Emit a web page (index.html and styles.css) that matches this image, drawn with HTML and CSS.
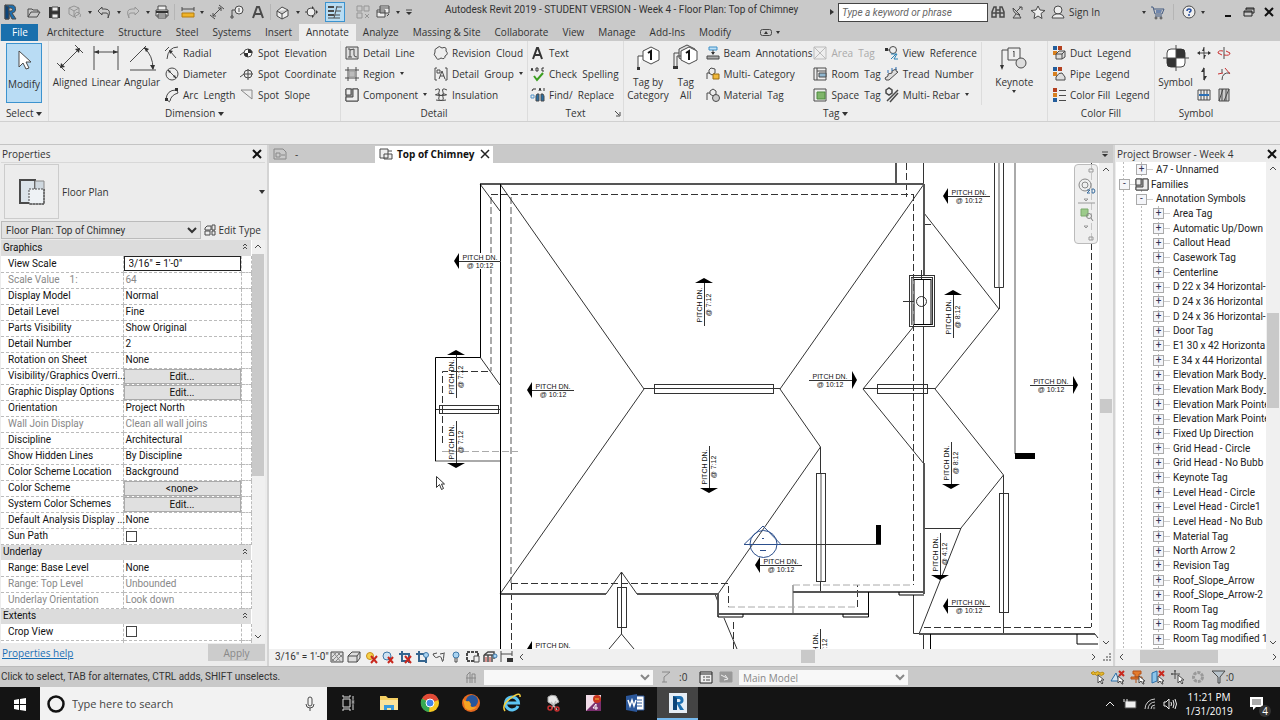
FILE: index.html
```html
<!DOCTYPE html>
<html lang="en">
<head>
    <meta charset="UTF-8">
    <meta name="viewport" content="width=device-width, initial-scale=1.0">
    <title>Autodesk Revit 2019</title>
    <link rel="stylesheet" href="styles.css">
</head>
<body>
    <!-- title bar -->
    <header class="titlebar">
        <div class="quick">
            <button class="logo" aria-label="Revit"><svg width="16" height="18" viewBox="0 0 16 18"><path d="M3 2h6a4 4 0 0 1 1 8l4 6h-4l-3-6v6H3z" fill="#1c6fb0"/><path d="M3 2l4 2v12H3z" fill="#0c4479"/><path d="M7 5h2a1.500 1.500 0 0 1 0 3H7z" fill="#c9c9c9"/></svg></button>
            <button aria-label="Open"><svg width="16" height="16"><path d="M2 13V5h4l1 1h5v2M2 13l3-5h9l-3 5z"/></svg></button>
            <button aria-label="Save"><svg width="16" height="16"><path class="dk" d="M2 3h11v11H2z"/><path d="M5 3h6v4H5zM5 10h6v4H5z" fill="#eee"/></svg></button>
            <button aria-label="Synchronize" class="dim"><svg width="16" height="16"><path d="M7 2l5 2v6l-5 3-5-3V4zM2 4l5 3 5-3M7 7v6M9 14a3 3 0 1 1 4-1"/></svg></button>
            <i class="car"></i>
            <button aria-label="Undo"><svg width="16" height="16"><path d="M6 3L2 7l4 4V9h4q3 0 2 5 4-9-3-9H6z"/></svg></button>
            <i class="car"></i>
            <button aria-label="Redo" class="dim"><svg width="16" height="16"><path d="M10 3l4 4-4 4V9H6q-3 0-2 5-4-9 3-9h3z"/></svg></button>
            <i class="car"></i>
            <button aria-label="Print"><svg width="16" height="16"><path d="M4 6V2h8v4M2 6h12v6H2zM4 10h8v4H4z" fill="#eee"/><path class="dk" d="M2 7h12v2H2z"/></svg></button>
            <span class="sep"></span>
            <button aria-label="Measure"><svg width="16" height="16"><path d="M2 3v4M14 3v4M2 5h12"/><path d="M2 9h12v4H2z" fill="#f0b429" stroke="#b57d10"/></svg></button>
            <i class="car"></i>
            <button aria-label="Aligned Dimension"><svg width="16" height="16"><path d="M4 12l8-8M1 11l5 4M10 1l5 4M4 12V9M4 12h3M12 4H9M12 4v3"/></svg></button>
            <button aria-label="Tag by Category"><svg width="16" height="16"><circle cx="10" cy="6" r="4" fill="#eee"/><path d="M10 4v4M6 6H3v6M2 12h2v2H2z"/></svg></button>
            <button aria-label="Text"><svg width="16" height="16"><path d="M3 14L7 3h2l4 11M5 10h6" stroke-width="2"/></svg></button>
            <span class="sep"></span>
            <button aria-label="3D View"><svg width="16" height="16"><path d="M2 7l5-4 6 3v6l-6 3-5-3zM2 7l5 3 6-4M7 10v5" fill="#eee"/></svg></button>
            <i class="car"></i>
            <button aria-label="Section"><svg width="16" height="16"><circle cx="7" cy="8" r="4" fill="#eee"/><path class="dk" d="M8 2l6 6-6 6v-2a4 4 0 0 0 0-8z"/><path d="M1 8h3"/></svg></button>
            <button aria-label="Thin Lines" class="lines"><svg width="16" height="16"><path d="M1 3h6M1 7h6M1 11h6" stroke-width="2"/><path d="M1 14h12M10 3h5M9 7h5M8 11h5M10 2L7 14"/></svg></button>
            <span class="sep clear"></span>
            <button aria-label="Close Hidden Windows" class="dim"><svg width="16" height="16"><path d="M2 2h5v5H2zM9 2h5v5H9zM2 9h5v5H2zM10 10l4 4M14 10l-4 4"/></svg></button>
            <button aria-label="Switch Windows"><svg width="16" height="16"><path d="M5 2h9v7H5zM5 4h9M2 6h8v7H2z" fill="#eee"/><path d="M2 8h8M12 12l2-2"/></svg></button>
            <i class="car"></i>
            <button aria-label="Customize"><svg width="10" height="10"><path d="M2 3h6"/><path class="dk" d="M2 5h6L5 8z"/></svg></button>
        </div>
        <h1>Autodesk Revit 2019 - STUDENT VERSION - Week 4 - Floor Plan: Top of Chimney</h1>
        <div class="search">
            <i class="car right"></i>
            <input type="text" aria-label="Search help" placeholder="Type a keyword or phrase">
        </div>
        <div class="info">
            <button aria-label="Search"><svg width="16" height="16"><path d="M2 13V8l2-5h2v10zM14 13V8l-2-5h-2v10zM6 6h4v3H6zM2 9h4M10 9h4" stroke-width="1.500"/></svg></button>
            <button aria-label="Communication Center"><svg width="16" height="16"><path d="M3 4q0 6 7 7zM7 7l4-4M9 3h3v3M6 10l-3 4h8l-2-3"/></svg></button>
            <button aria-label="Favorites"><svg width="16" height="16"><path d="M8 2l2 4 5 .5-4 3 1 5-4-2.500-4 2.500 1-5-4-3L6 6z" fill="#eee"/></svg></button>
            <button class="signin"><svg width="16" height="16"><circle cx="8" cy="6" r="4" fill="#eee"/><path d="M2 14q0-3 4-4h4q4 1 4 4z" fill="#eee"/></svg>Sign In</button>
            <i class="car"></i>
            <button aria-label="App Store"><svg width="16" height="16"><path d="M1 3h2l2 7h7l2-5H4M5 12h7" stroke="#435a80"/><circle cx="6" cy="14" r="1"/><circle cx="11" cy="14" r="1"/><path d="M6 6h6l-1 3H6z" fill="#6f86ad" stroke="none"/></svg></button>
            <span class="sep"></span>
            <button aria-label="Help"><svg width="16" height="16"><circle cx="8" cy="8" r="6" fill="#eee"/><path d="M6 7q0-2 2-2t2 1.500q0 1-2 2M8 10v2" stroke="#2850a0" stroke-width="1.500"/></svg></button>
            <i class="car"></i>
            <div class="win">
                <button aria-label="Minimize"><svg width="14" height="14"><path d="M4 11h6" stroke="#111" stroke-width="2"/></svg></button>
                <button aria-label="Restore"><svg width="14" height="14"><path d="M4 5V3h8v5h-2M2 6h8v5H2zM2 7h8M4 4h8" stroke="#222"/></svg></button>
                <button aria-label="Close"><svg width="14" height="14"><path d="M3 3l8 8M11 3l-8 8" stroke="#111" stroke-width="2"/></svg></button>
            </div>
        </div>
    </header>

    <nav class="tabs">
        <a class="file" href="#">File</a>
        <a href="#">Architecture</a>
        <a href="#">Structure</a>
        <a href="#">Steel</a>
        <a href="#">Systems</a>
        <a href="#">Insert</a>
        <a href="#" class="on">Annotate</a>
        <a href="#">Analyze</a>
        <a href="#">Massing &amp; Site</a>
        <a href="#">Collaborate</a>
        <a href="#">View</a>
        <a href="#">Manage</a>
        <a href="#">Add-Ins</a>
        <a href="#">Modify</a>
        <button aria-label="Minimize ribbon"><svg width="12" height="8"><rect x=".5" y=".5" width="11" height="6" rx="2"/><path class="dk" d="M4 5h4L6 2z"/></svg><i class="car"></i></button>
    </nav>

    <!-- ribbon -->
    <section class="ribbon">
        <div class="panel p-select">
            <div class="tools">
                <button class="big modify"><svg width="30" height="30"><path d="M10 5v16l4-4 3 6 3-1-3-6h5z" fill="#fff"/></svg>Modify</button>
            </div>
            <h2>Select <i class="car b"></i></h2>
        </div>
        <div class="panel p-dim">
            <div class="tools">
                <button class="big"><svg width="30" height="30"><path d="M6 23L24 5M2 19l8 8M20 1l8 8"/><path class="dk" d="M5 24l1-5 4 4zM25 4l-1 5-4-4z"/></svg>Aligned</button>
                <button class="big"><svg width="30" height="30"><path d="M3 2v24M27 2v24M3 8h24"/><path class="dk" d="M3 8l5-2v4zM27 8l-5-2v4z"/></svg>Linear</button>
                <button class="big"><svg width="30" height="30"><path d="M3 18L19 2M3 26h26M17 4q9 7 9 21"/><path class="dk" d="M17 3l5 2-3 3zM26 26l-3-5h5z"/></svg>Angular</button>
                <div class="col">
                    <button><svg width="16" height="16"><path d="M14 2Q4 2 3 14M12 13L6 6M1 6l4-4"/><path class="dk" d="M5 5l4 1-3 3z"/></svg>Radial</button>
                    <button><svg width="16" height="16"><circle cx="8" cy="8" r="6"/><path d="M4 4l8 8"/><path class="dk" d="M4 4l3 1-2 2zM12 12l-3-1 2-2z"/></svg>Diameter</button>
                    <button><svg width="16" height="16"><path d="M2 12Q3 3 12 3M6 14q1-6 8-8M1 12l5 3M12 1l2 5"/><path class="dk" d="M11 1h3v3h-3zM1 11h3v3H1z"/></svg>Arc&nbsp; Length</button>
                </div>
                <div class="col">
                    <button><svg width="16" height="16"><path d="M1 10l4-3M5 7h9"/><circle cx="9" cy="8" r="4" fill="#fff"/><path class="dk" d="M9 4a4 4 0 0 1 4 4H9zM9 12a4 4 0 0 1-4-4h4z"/></svg>Spot&nbsp; Elevation</button>
                    <button><svg width="16" height="16"><path d="M1 11l4-3h9M9 3v11"/><circle cx="9" cy="8" r="4"/></svg>Spot&nbsp; Coordinate</button>
                    <button><svg width="16" height="16"><path d="M2 3h11v9z" stroke="#888"/></svg>Spot&nbsp; Slope</button>
                </div>
            </div>
            <h2>Dimension <i class="car b"></i></h2>
        </div>
        <div class="panel p-detail">
            <div class="tools">
                <div class="col">
                    <button><svg width="16" height="16"><path d="M2 2h12v12H2z" fill="#ddd"/><path d="M4 4h2v8M4 12h4M10 4v6q0 2 3 2M6 5l4-1"/></svg>Detail&nbsp; Line</button>
                    <button><svg width="16" height="16"><path d="M4 1v14M12 1v14M1 4h14M1 12h14"/><path d="M5 5h6v6H5z" fill="#bbb" stroke="#999"/></svg>Region <i class="car"></i></button>
                    <button><svg width="16" height="16"><path d="M2 2h12v12H2z" fill="#999"/><path d="M2 2h5v6H2zM9 2h5v12H2v-4h7z" fill="#eee"/></svg>Component <i class="car"></i></button>
                </div>
                <div class="col">
                    <button><svg width="16" height="16"><path d="M4 3q2-3 5 0 5-2 4 3 3 3-1 5 0 4-4 2-4 3-5-1-3-2-1-5-1-3 2-4z"/></svg>Revision&nbsp; Cloud</button>
                    <button><svg width="16" height="16"><path d="M4 2H2v12h2M12 2h2v12h-2M4 4h3v3H4zM6 13l3-8 3 8M7 10h4"/></svg>Detail&nbsp; Group <i class="car"></i></button>
                    <button><svg width="16" height="16"><path d="M2 3q6-3 4 2t7 3M14 3Q8 0 10 5T3 8M2 8q6-3 4 2t7 3M14 8q-6-3-4 2t-7 3"/></svg>Insulation</button>
                </div>
            </div>
            <h2>Detail</h2>
        </div>
        <div class="panel p-text">
            <div class="tools">
                <div class="col">
                    <button><svg width="16" height="16"><path d="M3 14L7 3h1l4 11M5 10h6" stroke-width="2" stroke="#333"/></svg>Text</button>
                    <button><svg width="16" height="16"><path d="M1 5l1-3 1 3M6 2v3h2V2zM14 2h-2v3h2" stroke="#333"/><path d="M4 10l3 4 6-7" stroke="#3c9f20" stroke-width="2"/></svg>Check&nbsp; Spelling</button>
                    <button><svg width="16" height="16"><path d="M2 4q0-3 4-2M9 4l1-3 1 3M14 1v3" stroke="#333"/><path d="M1 8h3v3H1z" stroke="#5192c8"/><path d="M6 14V9l1-2h2v7zM14 14V9l-1-2h-2v7z" fill="#276fa6"/></svg>Find/&nbsp; Replace</button>
                </div>
            </div>
            <h2>Text <svg class="launch" width="8" height="8"><path d="M1 1l4 4M6 2v4H2"/></svg></h2>
        </div>
        <div class="panel p-tag">
            <div class="tools">
                <button class="big two"><svg width="30" height="30"><path d="M18 3l8 4v9l-8 4-8-4V7zM10 12H5v13" fill="#fff"/><path class="dk" d="M4 23h3v3H4z"/><path d="M15 9l3-2v9" stroke="#111" stroke-width="2"/></svg>Tag by<br>Category</button>
                <button class="big two"><svg width="30" height="30"><path d="M16 1l8 4v9l-8 4-8-4V5z" fill="#ddd"/><path d="M10 12H6v13M8 9H3v14"/><path d="M18 3l8 4v9l-8 4-8-4V7z" fill="#fff"/><path class="dk" d="M2 22h5v3H2z"/><path d="M15 9l3-2v9" stroke="#111" stroke-width="2"/></svg>Tag<br>All</button>
                <div class="col">
                    <button><svg width="16" height="16"><path d="M4 2h8v3H4z" fill="#bfe0f5" stroke="#3c8fc7"/><path d="M8 5v4M2 11h12v3H2z" fill="#aaa"/><path class="dk" d="M6 7h4L8 10z"/></svg>Beam&nbsp; Annotations</button>
                    <button><svg width="16" height="16"><path d="M2 13V7h3M6 2l4 1v4L7 9 4 7V4z"/><path d="M8 8h6v5H8z" fill="#f0b93c" stroke="#9b6c10"/></svg>Multi- Category</button>
                    <button><svg width="16" height="16"><path d="M2 13V6h3M5 4l3-2 3 2v3L8 9 5 7z"/><circle cx="11" cy="11" r="3.500" fill="#ccc"/></svg>Material&nbsp; Tag</button>
                </div>
                <div class="col">
                    <button disabled><svg width="16" height="16"><path d="M2 2h12v12H2zM2 2l12 12M14 2L2 14" stroke="#bbb"/></svg>Area&nbsp; Tag</button>
                    <button><svg width="16" height="16"><path d="M2 2h12v12H2zM5 2v12M5 5h9"/><path d="M7 7h7v4H7z" fill="#8fb6cf"/></svg>Room&nbsp; Tag</button>
                    <button><svg width="16" height="16"><path d="M2 2h12v12H2z"/><path d="M5 5h8v7H5z" fill="#7fb56a" stroke="#4d8b3c"/></svg>Space&nbsp; Tag</button>
                </div>
                <div class="col">
                    <button><svg width="16" height="16"><path d="M1 5h5"/><circle cx="9" cy="5" r="3.500"/><path class="dk" d="M1 3h3v3H1z"/><path d="M7 9h6l-3 5h4M7 14l5-5" stroke="#2b82b5"/></svg>View&nbsp; Reference</button>
                    <button><svg width="16" height="16"><path d="M1 12l3-2v-2l4-1V5l4-2v2l2 1-9 8H2z" fill="#ddd"/><path d="M4 4v3M8 2v3M12 1v3" stroke="#2b6fb5"/></svg>Tread&nbsp; Number</button>
                    <button><svg width="16" height="16"><path d="M3 14l5-5 6-6M6 15l8-9M2 3l3-2 3 2v3L5 8 2 6z" stroke-width="1.500"/></svg>Multi- Rebar <i class="car"></i></button>
                </div>
                <span class="vline"></span>
                <button class="big key"><svg width="30" height="30"><path d="M9 4h12v12H9zM9 6H3v18"/><path d="M14 8l1-1v6"/><circle cx="22" cy="19" r="5" fill="#ddd"/><path class="dk" d="M1 21h4l-2 5z"/></svg>Keynote<i class="car"></i></button>
            </div>
            <h2>Tag <i class="car b"></i></h2>
        </div>
        <div class="panel p-fill">
            <div class="tools">
                <div class="col">
                    <button><svg width="16" height="16"><g stroke="none"><path d="M2 1h4v4H2z" fill="#245e9c"/><path d="M7 1h4v4H7z" fill="#b3401f"/><path d="M2 6h4v4H2z" fill="#d8801f"/></g><path d="M5 9l3-3h6v6l-3 2H5zM5 9h6v5M11 9l3-3" fill="#ddd"/></svg>Duct&nbsp; Legend</button>
                    <button><svg width="16" height="16"><g stroke="none"><path d="M2 1h4v4H2z" fill="#245e9c"/><path d="M7 1h4v4H7z" fill="#b3401f"/><path d="M2 6h4v4H2z" fill="#d8801f"/></g><path d="M5 11q3-5 6-4l3 4v3H5z" fill="#ddd"/></svg>Pipe&nbsp; Legend</button>
                    <button><svg width="16" height="16"><g stroke="none"><path d="M2 1h4v4H2z" fill="#b3401f"/><path d="M2 6h4v4H2z" fill="#d8801f"/><path d="M2 11h4v4H2z" fill="#245e9c"/></g><path d="M8 3.500h7M8 8.500h7M8 13.500h7"/></svg>Color Fill&nbsp; Legend</button>
                </div>
            </div>
            <h2>Color Fill</h2>
        </div>
        <div class="panel p-symbol">
            <div class="tools">
                <button class="big"><svg width="30" height="30"><rect x="6" y="5" width="18" height="18" rx="4" fill="#fff"/><path class="dk" d="M15 5h6q3 0 3 3v6h-9zM6 14h9v9H9q-3 0-3-3z"/><path d="M15 1v26M2 14h26"/></svg>Symbol</button>
                <div class="mini">
                    <button aria-label="Span Direction"><svg width="16" height="16"><path d="M2 8h12M8 2v12"/><path class="dk" d="M1 8l3-2v4zM15 8l-3-2v4zM8 2L6 6h2zM8 14l2-4H8z"/></svg></button>
                    <button aria-label="Beam"><svg width="16" height="16"><path d="M8 2v12"/><path d="M2 8q0-3 5-2M14 8q0 3-6 2M2 8l4 2M14 8l-4-2" stroke="#c83030"/></svg></button>
                    <button aria-label="Stair Path"><svg width="16" height="16"><path d="M8 2v12" stroke-width="1.500"/><path class="dk" d="M8 1L5 6h3zM8 15l3-5H8z"/></svg></button>
                    <button aria-label="Area"><svg width="16" height="16"><path d="M6 14q0-8 8-7M6 3v4"/><path d="M2 8l5-1M9 2l5 6" stroke="#c83030"/></svg></button>
                    <button aria-label="Path"><svg width="16" height="16"><path d="M2 3h12v10H2zM5 3v10M8 3v10M11 3v10"/><path d="M3 8h10" stroke="#2b6fb5" stroke-width="2"/></svg></button>
                    <button aria-label="Fabric"><svg width="16" height="16"><path d="M3 2h10v12H3zM6 2v12M10 2v12M3 14l4-12M8 14l5-12" fill="#ccc"/></svg></button>
                </div>
            </div>
            <h2>Symbol</h2>
        </div>
    </section>
    <div class="options"></div>

    <main>
        <!-- properties palette -->
        <aside class="props">
            <div class="head"><span>Properties</span><button aria-label="Close"><svg width="12" height="12"><path d="M2 2l8 8M10 2l-8 8" stroke="#111" stroke-width="2"/></svg></button></div>
            <div class="type">
                <span class="thumb"><svg width="30" height="30"><path d="M3 3h15v23H3z" fill="#dce4ea" stroke-width="2"/><path d="M18 4h9v10h-9z" fill="#cfd8df" stroke="#888"/><path d="M12 12h15v15H12z" fill="#eef2f5" stroke-dasharray="2 1"/><path d="M12 27h15V12"/></svg></span>
                <span class="name">Floor Plan</span>
                <i class="car b"></i>
            </div>
            <div class="inst">
                <select aria-label="Instance"><option>Floor Plan: Top of Chimney</option></select>
                <button><svg width="14" height="14"><path d="M4 3h4v4H2V5zM9 2h3v5H9zM2 8h5v4H2zM9 8h3v4H9z"/></svg>Edit Type</button>
            </div>
            <div class="grid">
                <table>
                    <colgroup><col class="c1"><col class="c2"><col class="c3"></colgroup>
                    <tr class="grp"><th colspan="3">Graphics<svg width="8" height="10"><path d="M2 5l2-2 2 2M2 8l2-2 2 2"/></svg></th></tr>
                    <tr><td>View Scale</td><td class="in"><input type="text" aria-label="View Scale" value='3/16" = 1&#39;-0"'></td><td></td></tr>
                    <tr class="off"><td>Scale Value &nbsp;&nbsp; 1:</td><td>64</td><td></td></tr>
                    <tr><td>Display Model</td><td>Normal</td><td></td></tr>
                    <tr><td>Detail Level</td><td>Fine</td><td></td></tr>
                    <tr><td>Parts Visibility</td><td>Show Original</td><td></td></tr>
                    <tr><td>Detail Number</td><td>2</td><td></td></tr>
                    <tr><td>Rotation on Sheet</td><td>None</td><td></td></tr>
                    <tr><td>Visibility/Graphics Overri...</td><td class="in"><button>Edit...</button></td><td></td></tr>
                    <tr><td>Graphic Display Options</td><td class="in"><button>Edit...</button></td><td></td></tr>
                    <tr><td>Orientation</td><td>Project North</td><td></td></tr>
                    <tr class="off"><td>Wall Join Display</td><td>Clean all wall joins</td><td></td></tr>
                    <tr><td>Discipline</td><td>Architectural</td><td></td></tr>
                    <tr><td>Show Hidden Lines</td><td>By Discipline</td><td></td></tr>
                    <tr><td>Color Scheme Location</td><td>Background</td><td></td></tr>
                    <tr><td>Color Scheme</td><td class="in"><button>&lt;none&gt;</button></td><td></td></tr>
                    <tr><td>System Color Schemes</td><td class="in"><button>Edit...</button></td><td></td></tr>
                    <tr><td>Default Analysis Display ...</td><td>None</td><td></td></tr>
                    <tr><td><label for="sun">Sun Path</label></td><td><input type="checkbox" id="sun"></td><td></td></tr>
                    <tr class="grp"><th colspan="3">Underlay<svg width="8" height="10"><path d="M2 5l2-2 2 2M2 8l2-2 2 2"/></svg></th></tr>
                    <tr><td>Range: Base Level</td><td>None</td><td></td></tr>
                    <tr class="off"><td>Range: Top Level</td><td>Unbounded</td><td></td></tr>
                    <tr class="off"><td>Underlay Orientation</td><td>Look down</td><td></td></tr>
                    <tr class="grp"><th colspan="3">Extents<svg width="8" height="10"><path d="M2 5l2-2 2 2M2 8l2-2 2 2"/></svg></th></tr>
                    <tr><td><label for="crop">Crop View</label></td><td><input type="checkbox" id="crop"></td><td></td></tr>
                    <tr><td></td><td><input type="checkbox" aria-label="Crop Region Visible"></td><td></td></tr>
                </table>
                <div class="vbar"><svg width="12" height="12"><path d="M3 8l3-3 3 3"/></svg><span class="knob tall"></span><svg width="12" height="12"><path d="M3 4l3 3 3-3"/></svg></div>
            </div>
            <div class="foot"><a href="#">Properties help</a><button disabled>Apply</button></div>
        </aside>

        <!-- drawing window -->
        <section class="doc">
            <div class="doctabs">
                <a href="#" class="tab first"><svg width="14" height="12"><path d="M1 1h9l3 3v7H1zM3 5h4v4H3zM8 7h4" stroke="#888"/></svg>-</a>
                <a href="#" class="tab on"><svg width="14" height="12"><path d="M1 1h8v9H1zM9 3h4M5 6h8v5H5z" fill="#eee"/></svg>Top of Chimney<svg width="12" height="12"><path d="M2 2l8 8M10 2l-8 8" stroke="#222" stroke-width="1.500"/></svg></a>
                <svg class="more" width="10" height="10"><path d="M2 3h6"/><path class="dk" d="M2 5h6L5 8z"/></svg>
            </div>
            <div class="view">
                <div class="canvas">
                    <svg class="plan" width="100%" height="100%">
                        <g transform="translate(-269 -163)">
                            <!-- eaves below, dashed -->
                            <g class="dash">
                                <path d="M491 194.500H914M913.500 194V585M906.500 163V197M442.500 443V371.500H491M511 583.500H728.500V607M511.500 583V649M857.500 607V585M733.500 622V649M924 627.500H1091.500M1091.500 163V627"/>
                                <path class="soft wide" d="M491 197V371M511 197V583"/>
                                <path class="soft" d="M442 451.500H518M728 607H857M793 585H913"/>
                            </g>
                            <!-- hips and valleys -->
                            <g class="thin">
                                <path d="M480 184L500 211M500 184L644 389L500 594M480 357L500 385M924 184L780 389L820.500 447L718 594M606 594L621.500 572L637 594M609 649L621.500 634L634 649M715 594L718 602M724 618L737 649"/>
                                <path d="M924 213L999 309L935 389L1003.500 475L961 528L919 634M914 326L863 389L924 464M1095 634L1098 638"/>
                            </g>
                            <!-- ridges -->
                            <g class="thin">
                                <path d="M644 388.500H780M863 388.500H935M435 409.500H500M820.500 447V591M621.500 572V634M999.500 287V309M1003.500 475V634M924 528.500H961M924 224.500H931"/>
                                <rect x="654.500" y="384.500" width="119" height="9"/>
                                <rect x="877.500" y="384.500" width="50" height="9"/>
                                <rect x="439.500" y="405.500" width="59" height="8"/>
                                <rect x="816.500" y="473.500" width="9" height="108"/>
                                <rect x="617.500" y="587.500" width="9" height="40"/>
                                <rect x="999.500" y="493.500" width="9" height="119"/>
                                <path d="M994.500 163V287.500H1003.500V163"/>
                                <path class="soft wide" d="M999 163V287M1015 163V454M821 474V581M793 585V614M435 461H500"/>
                                <path d="M923.500 163V184M923.500 327V463M913.500 595V633.500H919M923.500 634V649"/>
                            </g>
                            <!-- roof edges -->
                            <g class="edge">
                                <path d="M480 184H924M924 184V275M924 463V594M500 594H606M637 594H718V617M718 614H868M793 592H924M919 634H1095M896 163V184"/>
                                <path class="blk" d="M480.500 184V357.500H435.500V461M500.500 184V649M718 617H743V614M868.500 592V617H843V614M899 592V595H924M930.500 634V649M1077 634V644H1098"/>
                            </g>
                            <!-- chimney -->
                            <g class="thin">
                                <rect x="909.500" y="275.500" width="25" height="51"/>
                                <rect x="911.500" y="277.500" width="21" height="47"/>
                                <rect x="914" y="279.500" width="17" height="45" class="blk"/>
                                <path class="soft wide" d="M912.500 278V325"/>
                                <path d="M903 301.500H914M921.500 270V279M923.500 280V324"/>
                                <circle cx="921.500" cy="301.500" r="5"/>
                            </g>
                            <path d="M1015 453h20v6h-20zM876 525h5v20h-5z"/>
                            <path class="thin" d="M777 544.500H881"/>
                            <g class="mark">
                                <circle cx="763.500" cy="544" r="13.500"/>
                                <path d="M744 544.500L763 526L781 544.500ZM760 550.500H766M762 538.500H764"/>
                            </g>
                            <!-- slope arrows -->
                            <g class="pitch">
                                <g transform="translate(454 261)"><path class="bg" d="M9 -8h35v16h-35z"/><path d="M0 0l5-8v16z"/><path class="thin" d="M5 .5H47"/><text x="26" y="-1">PITCH DN.</text><text x="26" y="7">@ 10:12</text></g>
                                <g transform="translate(527 390)"><path d="M0 0l5-8v16z"/><path class="thin" d="M5 .5H47"/><text x="26" y="-1">PITCH DN.</text><text x="26" y="7">@ 10:12</text></g>
                                <g transform="translate(943 196)"><path d="M0 0l5-8v16z"/><path class="thin" d="M5 .5H47"/><text x="26" y="-1">PITCH DN.</text><text x="26" y="7">@ 10:12</text></g>
                                <g transform="translate(755 565)"><path d="M0 0l5-8v16z"/><path class="thin" d="M5 .5H47"/><text x="26" y="-1">PITCH DN.</text><text x="26" y="7">@ 10:12</text></g>
                                <g transform="translate(943 606)"><path d="M0 0l5-8v16z"/><path class="thin" d="M5 .5H47"/><text x="26" y="-1">PITCH DN.</text><text x="26" y="7">@ 10:12</text></g>
                                <g transform="translate(527 649)"><path d="M0 0l5-8v16z"/><text x="26" y="-1">PITCH DN.</text></g>
                                <g transform="translate(857 380)"><path d="M0 0l-5-9v18z"/><path class="thin" d="M-5 .5H-48"/><text x="-27" y="-1">PITCH DN.</text><text x="-27" y="7">@ 10:12</text></g>
                                <g transform="translate(1078 385)"><path d="M0 0l-5-9v18z"/><path class="thin" d="M-5 .5H-48"/><text x="-27" y="-1">PITCH DN.</text><text x="-27" y="7">@ 10:12</text></g>
                                <g transform="translate(704 278) rotate(-90)"><path d="M0 0l-5-9v18z"/><path class="thin" d="M-5 .5H-48"/><text x="-27" y="-2">PITCH DN.</text><text x="-27" y="7">@ 7:12</text></g>
                                <g transform="translate(456 350) rotate(-90)"><path d="M0 0l-5-9v18z"/><path class="thin" d="M-5 .5H-48"/><text x="-27" y="-2">PITCH DN.</text><text x="-27" y="7">@ 7:12</text></g>
                                <g transform="translate(953 290) rotate(-90)"><path d="M0 0l-5-9v18z"/><path class="thin" d="M-5 .5H-48"/><text x="-27" y="-2">PITCH DN.</text><text x="-27" y="7">@ 8:12</text></g>
                                <g transform="translate(709 493) rotate(-90)"><path d="M0 0l5-9v18z"/><path class="thin" d="M5 .5H47"/><text x="26" y="-2">PITCH DN.</text><text x="26" y="7">@ 7:12</text></g>
                                <g transform="translate(456 468) rotate(-90)"><path d="M0 0l5-9v18z"/><path class="thin" d="M5 .5H47"/><text x="26" y="-2">PITCH DN.</text><text x="26" y="7">@ 7:12</text></g>
                                <g transform="translate(951 489) rotate(-90)"><path d="M0 0l5-9v18z"/><path class="thin" d="M5 .5H47"/><text x="26" y="-2">PITCH DN.</text><text x="26" y="7">@ 8:12</text></g>
                                <g transform="translate(940 580) rotate(-90)"><path d="M0 0l5-9v18z"/><path class="thin" d="M5 .5H47"/><text x="26" y="-2">PITCH DN.</text><text x="26" y="7">@ 4:12</text></g>
                                <g transform="translate(820 676) rotate(-90)"><path class="thin" d="M5 .5H47"/><text x="26" y="-2">PITCH DN.</text><text x="26" y="7">@ 7:12</text></g>
                            </g>
                            <path class="cursor" d="M436.500 476.500v11l3-3 2 5 2-1-2-4.500h3z"/>
                        </g>
                    </svg>
                    <div class="navbar">
                        <svg width="22" height="78"><path d="M14 4h4v3h-4zM14 72h4v3h-4zM9 34l2 2 2-2zM9 61l2 2 2-2zM3 38h17" stroke="#999"/><g stroke="#888"><circle cx="10" cy="20" r="6"/><circle cx="10" cy="20" r="3"/></g><path d="M12 25h3l-3 3h3M17 24v4h2l1-2-1-2z" stroke="#3d6f9e"/><path d="M6 44h7v7H6z" fill="#9ccb8a" stroke="#7ba96a"/><circle cx="14" cy="51" r="2.500" stroke="#888"/><path d="M16 53l2 3" stroke="#888"/></svg>
                    </div>
                </div>
                <div class="vbar"><svg width="12" height="12"><path d="M3 8l3-3 3 3"/></svg><span class="knob mid"></span><svg width="12" height="12"><path d="M3 4l3 3 3-3"/></svg></div>
            </div>
            <div class="viewbar">
                <span class="scale">3/16" = 1'-0"</span>
                <button aria-label="Detail Level"><svg width="16" height="14"><path d="M2 2h12v10H2z" fill="#ddd"/><path d="M2 4l2-2 8 10M2 8l6-6M6 12l8-8M8 2l6 6M2 8l4 4M2 12L12 2" stroke="#888"/></svg></button>
                <button aria-label="Visual Style"><svg width="16" height="14"><path d="M2 6l4-4h8v6l-3 4H2zM2 6h9v6M11 6l3-4" fill="#ddd"/></svg></button>
                <button aria-label="Sun Path"><svg width="16" height="14"><circle cx="7" cy="6" r="3.500" fill="#f6d14a" stroke="#c98f1c"/><path class="red" d="M8 6l6 7M14 6l-6 7"/></svg></button>
                <button aria-label="Shadows"><svg width="16" height="14"><circle cx="7" cy="6" r="4" fill="#cfe3f2" stroke="#3f78a8"/><path class="red" d="M8 7l5 6M13 7l-5 6"/></svg></button>
                <button aria-label="Crop View"><svg width="16" height="14"><path d="M5 1v10h8M2 4h10v9" stroke="#35658f" stroke-width="2"/><path class="red" d="M8 6l6 7M14 6l-6 7"/></svg></button>
                <button aria-label="Show Crop Region"><svg width="16" height="14"><path d="M5 1v10h8M2 4h10v9" stroke="#35658f" stroke-width="2"/><circle cx="12" cy="5" r="2.500" fill="#a9d4f2" stroke="#3f78a8"/></svg></button>
                <button aria-label="Temporary Hide"><svg width="16" height="14"><path d="M2 4q2 5 5 3t4 3 2-6M2 4l4-1M9 4l5-1"/></svg></button>
                <button aria-label="Reveal Hidden Elements"><svg width="16" height="14"><circle cx="8" cy="5" r="3" fill="#a9d4f2" stroke="#3f78a8"/><path d="M7 8v4h2V8"/></svg></button>
                <button aria-label="Temporary View Properties"><svg width="16" height="14"><path d="M2 2h11v9H2z" stroke-width="2" stroke-dasharray="3 1"/><path d="M9 6h5v6H9z" fill="#eee"/></svg></button>
                <button aria-label="Analytical Model"><svg width="16" height="14"><path d="M2 5l4-3h6v7M2 5v7M6 5v7M10 5v7M2 5h9" stroke-width="1.500"/><path d="M4 7v5M8 7v5" stroke="#c03028"/><circle cx="13" cy="6" r="2" fill="#a9d4f2" stroke="#3f78a8"/></svg></button>
                <button aria-label="Reveal Constraints"><svg width="16" height="14"><path d="M2 1v11M13 1v5M2 4h11"/><path class="dk" d="M8 8h6v4H8z"/></svg></button>
                <div class="hbar"><svg width="12" height="12"><path d="M7 3L4 6l3 3"/></svg><span class="knob"></span><svg width="12" height="12"><path d="M5 3l3 3-3 3"/></svg></div>
                <svg width="14" height="14"><path d="M10 4h2M7 7h5M4 10h8" stroke="#999" stroke-width="2" stroke-dasharray="2 1"/></svg>
            </div>
        </section>

        <!-- project browser -->
        <aside class="browser">
            <div class="head"><span>Project Browser - Week 4</span><button aria-label="Close"><svg width="12" height="12"><path d="M2 2l8 8M10 2l-8 8" stroke="#111" stroke-width="2"/></svg></button></div>
            <div class="tree">
                <ul>
                    <li class="l2">A7 - Unnamed</li>
                    <li class="l1 open"><svg width="14" height="13"><path d="M1 1h12v11H1z" fill="#999"/><path d="M1 1h5v6H1zM8 1h5v11H1V9h7z" fill="#eee"/></svg>Families</li>
                    <li class="l2 open">Annotation Symbols</li>
                    <li>Area Tag</li>
                    <li>Automatic Up/Down</li>
                    <li>Callout Head</li>
                    <li>Casework Tag</li>
                    <li>Centerline</li>
                    <li>D 22 x 34 Horizontal-</li>
                    <li>D 24 x 36 Horizontal</li>
                    <li>D 24 x 36 Horizontal-</li>
                    <li>Door Tag</li>
                    <li>E1 30 x 42 Horizonta</li>
                    <li>E 34 x 44 Horizontal</li>
                    <li>Elevation Mark Body_</li>
                    <li>Elevation Mark Body_</li>
                    <li>Elevation Mark Pointe</li>
                    <li>Elevation Mark Pointe</li>
                    <li>Fixed Up Direction</li>
                    <li>Grid Head - Circle</li>
                    <li>Grid Head - No Bubb</li>
                    <li>Keynote Tag</li>
                    <li>Level Head - Circle</li>
                    <li>Level Head - Circle1</li>
                    <li>Level Head - No Bub</li>
                    <li>Material Tag</li>
                    <li>North Arrow 2</li>
                    <li>Revision Tag</li>
                    <li>Roof_Slope_Arrow</li>
                    <li>Roof_Slope_Arrow-2</li>
                    <li>Room Tag</li>
                    <li>Room Tag modified</li>
                    <li>Room Tag modified 1</li>
                    <li>Section Head - Filled</li>
                </ul>
                <div class="vbar"><svg width="12" height="12"><path d="M3 8l3-3 3 3"/></svg><span class="knob low"></span><svg width="12" height="12"><path d="M3 4l3 3 3-3"/></svg></div>
            </div>
            <div class="hbar"><svg width="12" height="12"><path d="M7 3L4 6l3 3"/></svg><span class="knob"></span><svg width="12" height="12"><path d="M5 3l3 3-3 3"/></svg></div>
        </aside>
    </main>

    <footer class="status">
        <p>Click to select, TAB for alternates, CTRL adds, SHIFT unselects.</p>
        <div class="sets">
            <svg width="14" height="14"><path d="M3 13V5l3-3v11M8 13V4h3v9M2 8h10" stroke="#888"/></svg>
            <select aria-label="Workset" disabled><option></option></select>
            <svg width="14" height="14"><path d="M3 2h8l-6 5v5M3 12h5" stroke="#888"/></svg>
            <span class="count">:0</span>
            <svg width="14" height="14"><path d="M1 2h12v11H1zM1 4h12" fill="#eee" stroke="#222"/><path d="M4 7h2M7 7h4M4 10h2M7 10h4"/></svg>
            <svg width="14" height="14"><path d="M1 2h12v10H1z" fill="#999" stroke="#999"/><path d="M2 5l6 3M6 5l3 4-4 1" stroke="#eee"/></svg>
            <select aria-label="Design option" disabled><option>Main Model</option></select>
        </div>
        <div class="picks">
            <svg width="16" height="16"><path d="M1 4q3-3 4 0 3-3 5 0 4-2 4 1-3 3-5 0-3 3-4 0-2 2-4-1z" fill="#e8b92e" stroke="#b98d15"/><path d="M8 6v8l2-2 2 3 1-1-2-3h3z" fill="#fff"/></svg>
            <svg width="16" height="16"><path d="M1 12l5-8 3 8z" fill="#cfe3f2" stroke="#2b6fa8"/><path class="red" d="M9 2l5 5M14 2L9 7"/><path d="M8 7v7l2-2 2 3h1l-1-3h2z" fill="#fff"/></svg>
            <svg width="16" height="16"><path d="M3 2h8v3H9v3H5V5H3zM1 8h11v2H1zM6 10v4" fill="#e47b2c" stroke="#b3521a"/><path d="M9 7v7l2-2 2 3h1l-1-3h2z" fill="#fff"/></svg>
            <svg width="16" height="16"><path d="M2 4l5-2v10l-5 2z" fill="#8cc4ea" stroke="#2b6fa8"/><path class="red" d="M9 2l5 5M14 2L9 7"/><path d="M8 7v7l2-2 2 3h1l-1-3h2z" fill="#fff"/></svg>
            <svg width="16" height="16"><path d="M5 1v9M1 5h9M4 2h2M2 4v2"/><path d="M8 6v8l2-2 2 3 1-1-2-3h3z" fill="#fff"/></svg>
            <svg width="16" height="16"><circle cx="8" cy="8" r="4.500" stroke="#999" stroke-width="3" stroke-dasharray="3 1"/></svg>
            <svg width="16" height="16"><path d="M2 2h13l-5 6v6H8V8z" fill="#b9c4cc"/></svg>
            <span>:0</span>
        </div>
    </footer>

    <!-- windows taskbar -->
    <footer class="taskbar">
        <button class="start" aria-label="Start"><svg width="14" height="14"><path d="M1 3l5-1v5H1zM7 2l6-1v6H7zM1 8h5v5l-5-1zM7 8h6v6l-6-1z" fill="#fff" stroke="none"/></svg></button>
        <div class="find"><svg width="20" height="20"><circle cx="10" cy="10" r="7.500" stroke="#111" stroke-width="2.500"/></svg><input type="text" aria-label="Search" placeholder="Type here to search"><svg width="14" height="16"><rect x="5" y="1" width="4" height="9" rx="2"/><path d="M3 8q0 4 4 4t4-4M7 12v3"/></svg></div>
        <div class="apps">
            <button aria-label="Task View"><svg width="20" height="20"><path d="M5 6h7v8H5zM5 2v2h7V2M5 18v-2h7v2M15 3v14" stroke="#ddd"/><path d="M14 7h2v4h-2z" fill="#ddd"/></svg></button>
            <button aria-label="File Explorer"><svg width="20" height="20"><path d="M1 3h6l2 2h10v12H1z" fill="#f4cf63" stroke="none"/><path d="M1 7h18v10H1z" fill="#fbe49b" stroke="none"/><path d="M5 17v-5h10v5h-3v-2H8v2z" fill="#3a9bdc" stroke="none"/></svg></button>
            <button aria-label="Chrome"><svg width="20" height="20"><circle cx="10" cy="10" r="9" fill="#f7c822" stroke="none"/><path d="M10 10L2 5.500A9 9 0 0 1 18.500 7z" fill="#e24a37" stroke="none"/><path d="M10 10L2 5.500A9 9 0 0 0 9 19z" fill="#36a852" stroke="none"/><circle cx="10" cy="10" r="4" fill="#4285e8" stroke="#fff" stroke-width="1"/></svg></button>
            <button aria-label="Firefox"><svg width="20" height="20"><circle cx="10" cy="10" r="9" fill="#e66a1f" stroke="none"/><circle cx="11" cy="8" r="6" fill="#27569b" stroke="none"/><path d="M2 6q2 3 6 2l2 3q-2 4 6 3-6 6-12 1z" fill="#f5a423" stroke="none"/></svg></button>
            <button aria-label="Internet Explorer"><svg width="20" height="20"><path d="M16 13a6.500 6.500 0 1 1 .5-3H5" stroke="#5cc4f2" stroke-width="3"/><path d="M3 18Q-1 12 9 5t9-1" stroke="#f4cf3e" stroke-width="1.500"/></svg></button>
            <button aria-label="Snipping Tool"><svg width="20" height="20"><path d="M5 4q3-3 8-1l3 6-6 3-5-3z" fill="#e8e8e8" stroke="#aaa"/><path d="M8 9l6 8M13 8l-5 9" stroke="#bbb" stroke-width="1.500"/><circle cx="7" cy="15" r="2" stroke="#c93030" stroke-width="1.500"/><circle cx="14" cy="16" r="2" stroke="#c93030" stroke-width="1.500"/></svg></button>
            <button aria-label="Photos"><svg width="20" height="20"><path d="M2 2h15v16H2z" fill="#f1dce8" stroke="none"/><path d="M2 18L14 6h3v12z" fill="#7b2f6f" stroke="none"/><circle cx="13" cy="6" r="4" fill="#c9351f" stroke="none"/><path d="M11 6h4" stroke="#f5c13a"/><path d="M12 11v6M9 15h5M12 11l-3 4" stroke="#fff"/></svg></button>
            <button aria-label="Word"><svg width="20" height="20"><path d="M10 3h9v14h-9z" fill="#fff" stroke="#2b579a"/><path d="M12 7h5M12 10h5M12 13h5" stroke="#2b579a"/><path d="M1 3l11-2v18L1 17z" fill="#2b579a" stroke="none"/><path d="M3 7l2 6 2-6 2 6 2-6" stroke="#fff" stroke-width="1.500"/></svg></button>
            <button class="cur" aria-label="Revit"><svg width="20" height="20"><path d="M1 0h18v20H1z" fill="#e5edf5" stroke="none"/><path d="M5 3h6a4 4 0 0 1 1 8l4 6h-4l-3-6v6H5z" fill="#1c6fb0" stroke="none"/><path d="M5 3l4 2v12H5z" fill="#0c4479" stroke="none"/><path d="M9 6h2a1.500 1.500 0 0 1 0 3H9z" fill="#e5edf5" stroke="none"/></svg></button>
        </div>
        <div class="tray">
            <svg width="16" height="16"><path d="M4 10l4-4 4 4" stroke="#eee"/></svg>
            <svg width="16" height="16"><path d="M3 5h11v7H3z" fill="#eee"/><path d="M2 3v3M5 3v3" stroke="#eee"/></svg>
            <svg width="16" height="16"><path d="M3 13A10 10 0 0 1 13 3M6 13a7 7 0 0 1 7-7M9 13a4 4 0 0 1 4-4" stroke="#ccc"/><circle cx="12" cy="12" r="1" fill="#eee"/></svg>
            <svg width="16" height="16"><path d="M2 6h2l3-3v10l-3-3H2zM9 6q1 2 0 4M11 4q2 4 0 8M13 3q3 5 0 10" stroke="#eee"/></svg>
            <div class="clock"><span>11:21 PM</span><span>1/31/2019</span></div>
            <button aria-label="Notifications"><svg width="18" height="18"><path d="M2 2h13v10H8l-3 3v-3H2z" fill="#fff" stroke="none"/><path d="M4 5h9M4 7h9M4 9h9" stroke="#555"/></svg><span class="badge">4</span></button>
        </div>
    </footer>
</body>
</html>
```
FILE: styles.css
```css
* {
    box-sizing: border-box;
    margin: 0;
    padding: 0;
}
body {
    display: flex;
    flex-direction: column;
    height: 100vh;
    overflow: hidden;
    background: #ececec;
    color: #333;
    font-family: "Open Sans", "Noto Sans", sans-serif;
    font-size: 10px;
    line-height: 14px;
}
button, input, select {
    font: inherit;
    color: inherit;
    border: 0;
    background: none;
}
a {
    color: inherit;
    text-decoration: none;
}
svg {
    flex: none;
    display: block;
    fill: none;
    stroke: #4a4a4a;
}
h1, h2 {
    font-size: 10px;
    font-weight: normal;
}
.dk {
    fill: #333;
    stroke: none;
}
.red {
    stroke: #c8281e;
    stroke-width: 2;
}
.car {
    flex: none;
    display: inline-block;
    border: 2px solid transparent;
    border-top: 3px solid #333;
    border-bottom: 0;
}
.car.b {
    border-width: 4px 3px 0;
    vertical-align: middle;
}
.car.right {
    border: 3px solid transparent;
    border-left: 4px solid #333;
    border-right: 0;
}
.sep {
    width: 1px;
    height: 16px;
    background: #b5b5b5;
}
.sep.clear {
    background: none;
}

/* title bar */
.titlebar {
    display: flex;
    align-items: center;
    height: 24px;
    background: #c9c9c9;
}
.titlebar h1, .search input, .inst, .grid, .tree, .status p, .scale {
    font-family: Roboto, "Open Sans", sans-serif;
}
.quick {
    display: flex;
    align-items: center;
    justify-content: space-between;
    width: 414px;
    padding-left: 2px;
}
.quick .dim {
    opacity: .4;
}
.logo {
    width: 20px;
}
.lines {
    padding: 1px;
    border: 1px solid #3c93cf;
    background: #b8dcf2;
}
.titlebar h1 {
    flex: 1;
    padding: 0 0 5px 31px;
    white-space: nowrap;
}
.search {
    display: flex;
    align-items: center;
    gap: 4px;
}
.search input {
    width: 150px;
    height: 19px;
    padding: 0 3px;
    border: 1px solid #444;
    background: #fff;
}
.search input::placeholder {
    color: #666;
    font-style: italic;
}
.info {
    display: flex;
    align-items: center;
    gap: 4px;
    width: 292px;
    padding: 0 4px 0 2px;
}
.signin {
    display: flex;
    align-items: center;
    gap: 3px;
    width: 88px;
}
.info .sep {
    margin: 0 3px;
}
.win {
    flex: 1;
    display: flex;
    justify-content: space-between;
    padding-left: 12px;
}

/* ribbon tabs */
.tabs {
    display: flex;
    height: 17px;
    padding-left: 1px;
    background: #c9c9c9;
}
.tabs a {
    padding: 0 7px;
    line-height: 17px;
}
.tabs .file {
    width: 37px;
    margin-right: 2px;
    padding: 0 11px;
    background: #1a70ad;
    color: #fff;
}
.tabs .on {
    background: #eee;
}
.tabs button {
    display: flex;
    align-items: center;
    gap: 4px;
    margin-left: 22px;
}

/* ribbon */
.ribbon {
    display: flex;
    height: 81px;
    background: #eee;
    border-bottom: 1px solid #d0d0d0;
}
.panel {
    flex: none;
    display: flex;
    flex-direction: column;
    border-right: 1px solid #dcdcdc;
}
.panel h2 {
    position: relative;
    text-align: center;
    line-height: 16px;
}
.launch {
    position: absolute;
    right: 1px;
    top: 5px;
}
.tools {
    flex: 1;
    display: flex;
    padding-top: 1px;
}
.big {
    display: flex;
    flex-direction: column;
    align-items: center;
    gap: 1px;
    width: 36px;
    height: 60px;
    padding-top: 2px;
    line-height: 13px;
}
.big svg {
    margin-bottom: 1px;
}
.modify {
    margin: 1px 0 0 6px;
    border: 1px solid #3c93cf;
    background: #b9dcf4;
}
.col {
    display: flex;
    flex-direction: column;
}
.col button {
    display: flex;
    align-items: center;
    gap: 3px;
    height: 21px;
    white-space: nowrap;
}
.col button .car {
    margin-left: 2px;
}
.col button:disabled {
    color: #aaa;
}
.vline {
    width: 1px;
    background: #dcdcdc;
}
.mini {
    display: grid;
    grid-template-columns: 20px 20px;
    grid-auto-rows: 21px;
    align-items: center;
}
.p-select { width: 49px; }
.p-dim { width: 292px; }
.p-detail { width: 187px; }
.p-text { width: 96px; }
.p-tag { width: 424px; }
.p-fill { width: 107px; }
.p-symbol { width: 82px; border: 0; }
.p-dim .tools { padding-left: 3px; }
.p-dim .col { width: 75px; margin-left: 4px; }
.p-dim .col + .col { margin-left: 0; }
.p-detail .tools, .p-fill .tools { padding-left: 3px; }
.p-text .tools { padding-left: 2px; }
.p-detail .col { width: 89px; }
.p-tag .tools { padding-left: 5px; }
.p-tag .two { width: 38px; }
.p-tag .col { width: 109px; }
.p-tag .col + .col { width: 72px; }
.p-tag .col + .col + .col { width: 98px; }
.p-tag .key { width: 66px; }
.p-symbol .big { width: 41px; }
.options {
    height: 23px;
    border-bottom: 1px solid #c4c4c4;
}

/* work area */
main {
    flex: 1;
    display: flex;
    min-height: 0;
}
.head {
    display: flex;
    align-items: center;
    justify-content: space-between;
    height: 17px;
    padding: 0 2px 0 1px;
}
.props {
    display: flex;
    flex-direction: column;
    width: 269px;
    padding: 0 2px 0 1px;
    border-right: 2px solid #d4d4d4;
}
.type {
    display: flex;
    align-items: center;
    height: 58px;
    border-top: 1px solid #d8d8d8;
    padding: 2px 0 2px 3px;
}
.thumb {
    display: flex;
    align-items: center;
    justify-content: center;
    width: 55px;
    height: 55px;
    border: 1px solid #ccc;
}
.name {
    flex: 1;
    padding-left: 3px;
}
.inst {
    display: flex;
    align-items: center;
    justify-content: space-between;
    height: 20px;
}
.inst select {
    width: 200px;
    height: 18px;
    border: 1px solid #bbb;
    background: #e2e2e2;
}
.inst button {
    display: flex;
    align-items: center;
    gap: 1px;
    padding-right: 4px;
    font-family: "Open Sans", sans-serif;
}
.grid {
    flex: 1;
    display: flex;
    min-height: 0;
    overflow: hidden;
    background: #fff;
}
table {
    flex: none;
    width: 250px;
    height: 0;
    table-layout: fixed;
    border-collapse: collapse;
    color: #111;
}
.c1 { width: 122px; }
.c2 { width: 118px; }
.c3 { width: 10px; }
tr {
    height: 16px;
}
td, th {
    height: 16px;
    border: 1px dashed #bbb;
    border-top: 0;
    padding: 0 0 0 2px;
    line-height: 14px;
    text-align: left;
    font-weight: normal;
    white-space: nowrap;
}
td:first-child {
    padding-left: 7px;
    border-left: 0;
}
th {
    position: relative;
    border: 0;
    background: #dcdcdc;
}
th svg {
    position: absolute;
    right: 2px;
    top: 1px;
}
.off {
    color: #888;
}
td.in {
    padding: 0;
}
td.in input {
    display: block;
    width: 100%;
    height: 15px;
    padding-left: 4px;
    border: 1px solid #222;
}
td.in button {
    display: block;
    width: 100%;
    height: 15px;
    border: 1px solid #aaa;
    background: #e0e0e0;
    line-height: 13px;
}
input[type=checkbox] {
    display: block;
    appearance: none;
    width: 11px;
    height: 11px;
    border: 1px solid #444;
    background: #fff;
}
.vbar {
    display: flex;
    flex-direction: column;
    align-items: center;
    width: 14px;
    margin-left: auto;
    background: #f0f0f0;
}
.vbar svg:last-child {
    margin-top: auto;
}
.knob {
    width: 12px;
    background: #c9c9c9;
}
.knob.tall {
    height: 222px;
    margin-top: 2px;
}
.knob.mid {
    height: 14px;
    margin-top: 224px;
}
.knob.low {
    height: 95px;
    margin-top: 139px;
}
.foot {
    display: flex;
    align-items: center;
    justify-content: space-between;
    height: 23px;
    padding: 0 0 4px 1px;
}
.foot a {
    color: #1a6fb5;
    text-decoration: underline;
}
.foot button {
    width: 57px;
    height: 17px;
    background: #ccc;
    color: #888;
}

/* drawing window */
.doc {
    flex: 1;
    display: flex;
    flex-direction: column;
    min-width: 0;
}
.doctabs {
    display: flex;
    align-items: center;
    height: 18px;
    background: #c9c9c9;
}
.tab {
    display: flex;
    align-items: center;
    gap: 4px;
    height: 17px;
    padding: 0 2px 0 4px;
}
.tab.first {
    gap: 8px;
    width: 106px;
}
.tab.on {
    background: #fff;
    color: #111;
    font-weight: bold;
}
.more {
    margin-left: auto;
    margin-right: 3px;
}
.view {
    flex: 1;
    display: flex;
    min-height: 0;
}
.canvas {
    flex: 1;
    position: relative;
    min-width: 0;
    overflow: hidden;
    background: #fff;
}
.plan {
    fill: #000;
    stroke: none;
}
.dash, .thin, .edge, .mark {
    fill: none;
    stroke: #333;
}
.dash {
    stroke-dasharray: 7 3;
}
.plan .soft {
    stroke: #aaa;
}
.plan .wide {
    stroke-width: 2;
}
.edge {
    stroke: #555;
    stroke-width: 2;
}
.blk {
    stroke: #000;
    stroke-width: 1;
}
.mark {
    stroke: #2c4f8c;
}
.pitch text {
    fill: #111;
    font-family: "Liberation Sans", Arial, sans-serif;
    font-size: 7px;
    text-anchor: middle;
}
.pitch .bg {
    fill: #fff;
}
.cursor {
    fill: #fff;
    stroke: #333;
}
.navbar {
    position: absolute;
    top: 1px;
    right: 1px;
    border: 1px solid #bbb;
    border-radius: 4px;
    background: rgba(235, 235, 235, .8);
}
.viewbar {
    display: flex;
    align-items: center;
    height: 17px;
    padding: 0 0 2px 6px;
    background: #f0f0f0;
}
.scale {
    width: 54px;
    white-space: nowrap;
}
.viewbar button {
    flex: 1 1 16px;
    max-width: 17px;
}
.hbar {
    display: flex;
    align-items: center;
    justify-content: space-between;
    height: 17px;
    padding-bottom: 2px;
    background: #f0f0f0;
}
.viewbar .hbar {
    flex: 1;
    height: 15px;
    padding: 0;
}
.hbar .knob {
    width: 14px;
    height: 13px;
}

/* project browser */
.browser {
    display: flex;
    flex-direction: column;
    width: 167px;
    padding-left: 1px;
    border-left: 2px solid #d4d4d4;
}
.tree {
    flex: 1;
    display: flex;
    min-height: 0;
}
.tree ul {
    flex: 1;
    overflow: hidden;
    list-style: none;
    color: #222;
    background:
        repeating-linear-gradient(#bbb 0 2px, transparent 2px 4px) 7px 0 / 1px 100% no-repeat,
        repeating-linear-gradient(#bbb 0 2px, transparent 2px 4px) 25px 0 / 1px 100% no-repeat,
        repeating-linear-gradient(#bbb 0 2px, transparent 2px 4px) 42px 44px / 1px 100% no-repeat,
        #fff;
}
.tree li {
    display: flex;
    align-items: center;
    height: 15px;
    padding-left: 37px;
    background: linear-gradient(#ccc, #ccc) 48px 7px / 6px 1px no-repeat;
    white-space: nowrap;
}
.tree li:nth-child(3n) {
    height: 14px;
}
.tree li::before {
    content: "+";
    flex: none;
    width: 9px;
    height: 9px;
    margin-right: 9px;
    border: 1px solid #aaa;
    background: #f4f5f9;
    color: #335;
    line-height: 7px;
    text-align: center;
}
.tree li.open::before {
    content: "-";
}
.tree .l2 {
    padding-left: 20px;
    background-position: 31px 7px;
}
.tree .l1 {
    padding-left: 3px;
    background-position: 13px 7px;
}
.tree .l1 svg {
    margin: 0 2px 0 -4px;
}
.browser .hbar .knob {
    width: 78px;
    margin-right: 38px;
}

/* status bar */
.status {
    display: flex;
    align-items: center;
    height: 21px;
    background: #c9c9c9;
    border-top: 1px solid #bbb;
}
.status p {
    width: 464px;
    padding-left: 1px;
}
.sets {
    flex: 1;
    display: flex;
    align-items: center;
    gap: 6px;
}
.sets select {
    width: 169px;
    height: 15px;
    background: #f8f8f8;
    color: #888;
    opacity: 1;
}
.count {
    width: 14px;
}
.picks {
    display: flex;
    align-items: center;
    gap: 4px;
    padding-right: 46px;
}
.picks span {
    margin-left: -4px;
}

/* taskbar */
.taskbar {
    display: flex;
    height: 33px;
    background: #141414;
    color: #fff;
}
.start {
    display: flex;
    align-items: center;
    justify-content: center;
    width: 40px;
}
.find {
    display: flex;
    align-items: center;
    gap: 6px;
    width: 287px;
    padding: 0 10px 0 6px;
    background: #f2f2f2;
    color: #333;
}
.find input {
    flex: 1;
    min-width: 0;
    font-size: 11px;
}
.find input::placeholder {
    color: #444;
}
.apps {
    flex: 1;
    display: flex;
}
.apps button {
    display: flex;
    align-items: center;
    justify-content: center;
    width: 41px;
    border-bottom: 2px solid transparent;
}
.apps .cur {
    margin-left: 2px;
    border-color: #76b9ed;
    background: #444;
}
.tray {
    display: flex;
    align-items: center;
    gap: 4px;
    padding-right: 14px;
}
.clock {
    display: flex;
    flex-direction: column;
    align-items: center;
    width: 54px;
}
.tray button {
    position: relative;
    margin-left: 8px;
}
.badge {
    position: absolute;
    right: -5px;
    bottom: -4px;
    width: 12px;
    height: 12px;
    border-radius: 6px;
    background: #333;
    color: #fff;
    line-height: 12px;
}
```
